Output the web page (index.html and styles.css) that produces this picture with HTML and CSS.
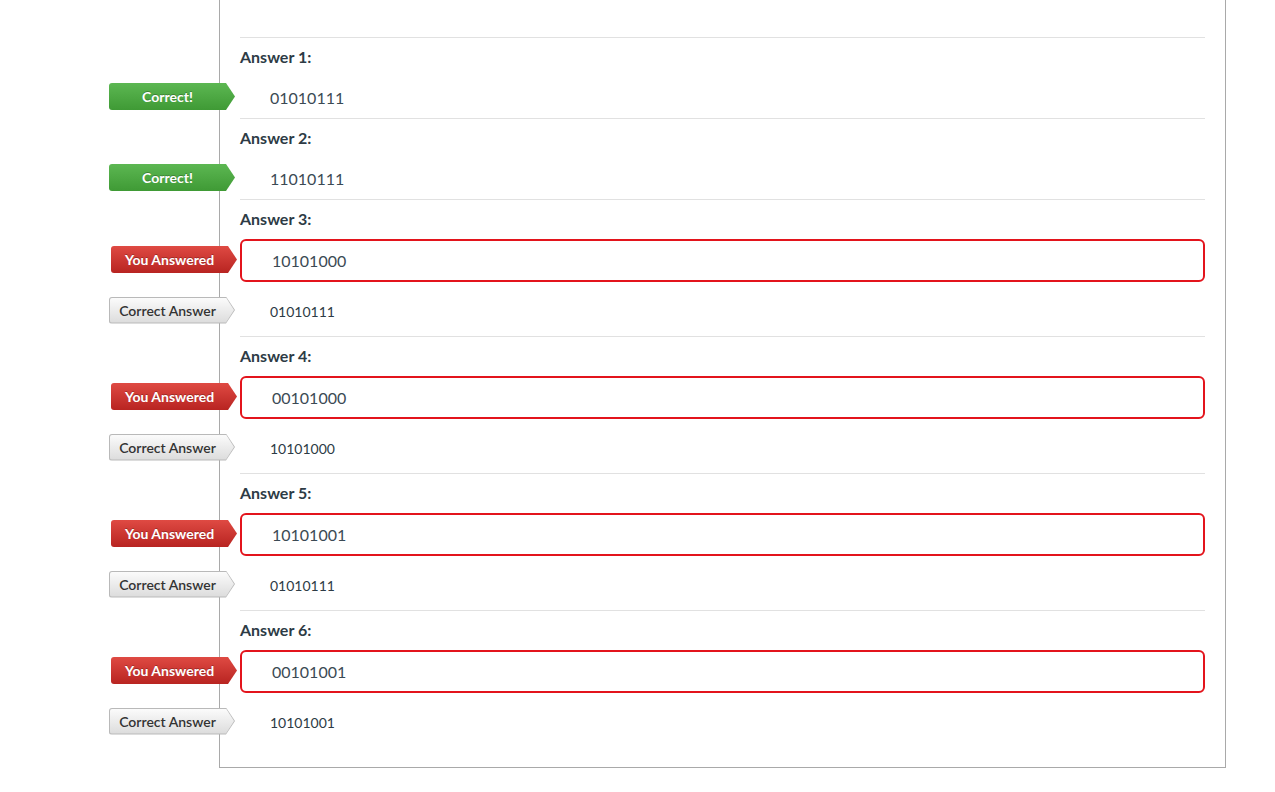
FILE: index.html
```html
<!DOCTYPE html>
<html lang="en">
<head>
<meta charset="utf-8">
<title>Quiz results</title>
<link rel="stylesheet" href="styles.css">
</head>
<body>
<div class="quiz">
  <div class="answer">
    <div class="label">Answer 1:</div>
    <div class="row">
      <span class="badge green">Correct!</span>
      <span class="value">01010111</span>
    </div>
  </div>
  <div class="answer">
    <div class="label">Answer 2:</div>
    <div class="row">
      <span class="badge green">Correct!</span>
      <span class="value">11010111</span>
    </div>
  </div>
  <div class="answer">
    <div class="label">Answer 3:</div>
    <div class="row wrong">
      <span class="badge red">You Answered</span>
      <div class="box">10101000</div>
    </div>
    <div class="row right">
      <span class="badge grey">Correct Answer</span>
      <span class="value small">01010111</span>
    </div>
  </div>
  <div class="answer">
    <div class="label">Answer 4:</div>
    <div class="row wrong">
      <span class="badge red">You Answered</span>
      <div class="box">00101000</div>
    </div>
    <div class="row right">
      <span class="badge grey">Correct Answer</span>
      <span class="value small">10101000</span>
    </div>
  </div>
  <div class="answer">
    <div class="label">Answer 5:</div>
    <div class="row wrong">
      <span class="badge red">You Answered</span>
      <div class="box">10101001</div>
    </div>
    <div class="row right">
      <span class="badge grey">Correct Answer</span>
      <span class="value small">01010111</span>
    </div>
  </div>
  <div class="answer">
    <div class="label">Answer 6:</div>
    <div class="row wrong">
      <span class="badge red">You Answered</span>
      <div class="box">00101001</div>
    </div>
    <div class="row right">
      <span class="badge grey">Correct Answer</span>
      <span class="value small">10101001</span>
    </div>
  </div>
</div>
</body>
</html>
```

FILE: styles.css
```css
html, body {
  margin: 0;
  padding: 0;
  background: #ffffff;
}

body {
  font-family: Lato, "Open Sans", "Liberation Sans", sans-serif;
  color: #2d3b45;
}

.quiz {
  box-sizing: border-box;
  width: 1007px;
  margin-left: 219px;
  border: 1px solid #a9a9a9;
  border-top: none;
  padding: 37px 20px 20px;
}

.answer {
  border-top: 1px solid #e1e1e1;
  padding-top: 9px;
}

.label {
  font-size: 16px;
  font-weight: 700;
  line-height: 20px;
  height: 20px;
}

.row {
  position: relative;
  display: flex;
  align-items: center;
  height: 41px;
  margin-top: 10px;
}

.row.wrong {
  height: 43px;
}

.row.right {
  height: 50px;
  margin-top: 4px;
}

.value {
  padding-left: 30px;
  font-size: 16px;
  color: #3b4a54;
}

.value.small {
  font-size: 14px;
  color: #2d3b45;
}

.box {
  flex: 1;
  box-sizing: border-box;
  height: 43px;
  border: 2px solid #e3141c;
  border-radius: 6px;
  padding-left: 30px;
  display: flex;
  align-items: center;
  font-size: 16px;
  color: #3b4a54;
}

.badge {
  position: absolute;
  left: -131px;
  top: calc(50% - 14.5px);
  box-sizing: border-box;
  width: 126px;
  height: 27px;
  padding-right: 9px;
  display: flex;
  align-items: center;
  justify-content: center;
  font-size: 14px;
  font-weight: 700;
  border-radius: 3px 0 0 3px;
  clip-path: polygon(0 0, calc(100% - 9px) 0, 100% 50%, calc(100% - 9px) 100%, 0 100%);
}

.badge.green {
  color: #ffffff;
  background: linear-gradient(#5cb752, #3f9a35);
  text-shadow: 0 -1px 0 rgba(0, 0, 0, 0.25);
}

.badge.red {
  left: -129px;
  color: #ffffff;
  background: linear-gradient(#df4a43, #b82421);
  text-shadow: 0 -1px 0 rgba(0, 0, 0, 0.25);
}

.badge.grey {
  color: #333333;
  font-weight: 600;
  background: #b9b9b9;
  z-index: 0;
}

.badge.grey::before {
  content: "";
  position: absolute;
  inset: 1px;
  z-index: -1;
  border-radius: 2px 0 0 2px;
  background: linear-gradient(#fbfbfb, #dcdcdc);
  clip-path: polygon(0 0, calc(100% - 8px) 0, 100% 50%, calc(100% - 8px) 100%, 0 100%);
}
```
